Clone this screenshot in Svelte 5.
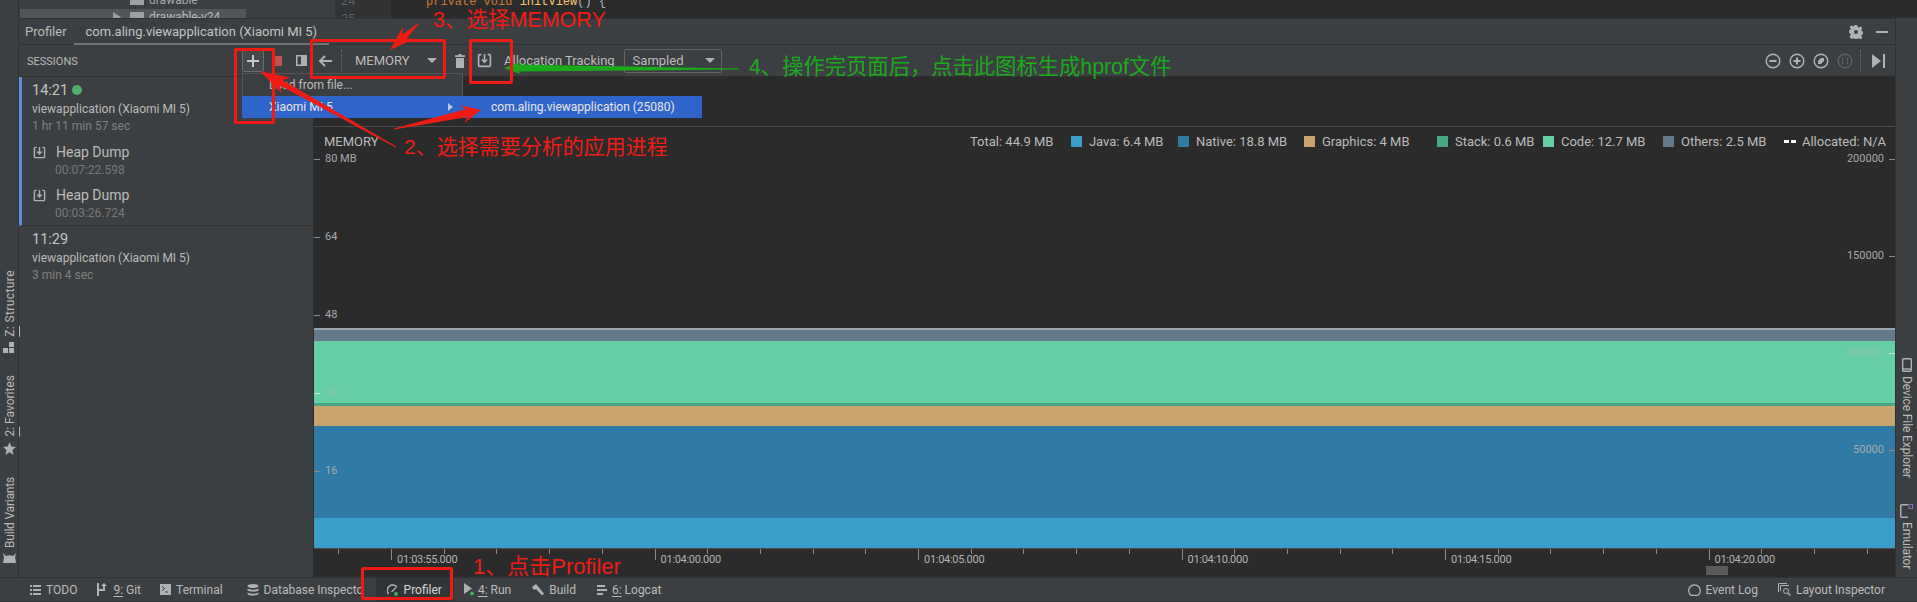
<script lang="ts">
  const majorTimes = ["01:03:55.000", "01:04:00.000", "01:04:05.000", "01:04:10.000", "01:04:15.000", "01:04:20.000"];
  const majorStep = 263.5;
  const minorStep = majorStep / 5;
  const firstMajor = 391 - 314;

  // every second gets a tick, counted back from the first labelled one
  const ticks = Array.from({ length: 31 }, (_, i) => {
    const index = i - 1;
    return { left: firstMajor + index * minorStep, major: index % 5 === 0 };
  });

  const legend = [
    { label: "Java: 6.4 MB", color: "#3a9dca", width: 107 },
    { label: "Native: 18.8 MB", color: "#2f7ba6", width: 126 },
    { label: "Graphics: 4 MB", color: "#c9a56d", width: 133 },
    { label: "Stack: 0.6 MB", color: "#47a783", width: 106 },
    { label: "Code: 12.7 MB", color: "#67cfa5", width: 120 },
    { label: "Others: 2.5 MB", color: "#64798a", width: 121 },
  ];

  const leftAxis = [
    { label: "80 MB", y: 2 },
    { label: "64", y: 80 },
    { label: "48", y: 158 },
    { label: "32", y: 236, faint: true },
    { label: "16", y: 314 },
  ];
  const rightAxis = [
    { label: "200000", y: 2 },
    { label: "150000", y: 99 },
    { label: "100000", y: 196, faint: true },
    { label: "50000", y: 293 },
  ];

  type Pt = [number, number];

  function arrow(tail: Pt, tip: Pt, w0: number, w1: number, headW: number, headL: number): string {
    const dx = tip[0] - tail[0];
    const dy = tip[1] - tail[1];
    const len = Math.hypot(dx, dy);
    const ux = dx / len;
    const uy = dy / len;
    const nx = -uy;
    const ny = ux;
    const nb = [tip[0] - ux * headL, tip[1] - uy * headL];
    const bb = [tip[0] - ux * headL * 1.25, tip[1] - uy * headL * 1.25];
    const p = (x: number, y: number) => `${x.toFixed(1)},${y.toFixed(1)}`;
    return [
      p(tail[0] + (nx * w0) / 2, tail[1] + (ny * w0) / 2),
      p(nb[0] + (nx * w1) / 2, nb[1] + (ny * w1) / 2),
      p(bb[0] + (nx * headW) / 2, bb[1] + (ny * headW) / 2),
      p(tip[0], tip[1]),
      p(bb[0] - (nx * headW) / 2, bb[1] - (ny * headW) / 2),
      p(nb[0] - (nx * w1) / 2, nb[1] - (ny * w1) / 2),
      p(tail[0] - (nx * w0) / 2, tail[1] - (ny * w0) / 2),
    ].join(" ");
  }

  const redArrows = [
    arrow([418, 24], [390, 50], 1, 6, 16, 20),
    arrow([396, 147], [260, 71], 1, 6, 18, 24),
    arrow([394, 129], [481, 110], 1, 8, 18, 15),
  ];
  const greenArrow = arrow([739, 69], [504, 68], 1, 7, 13, 14);
</script>

{#snippet dumpIcon(size)}
  <svg class="dump" width={size} height={size} viewBox="0 0 14 14" fill="none" stroke="currentColor">
    <path d="M4 1.5H2.5a1 1 0 0 0-1 1v9a1 1 0 0 0 1 1h9a1 1 0 0 0 1-1v-9a1 1 0 0 0-1-1H10" stroke-width="1.5" />
    <path d="M7 1v7M4.6 6 7 8.6 9.4 6" stroke-width="1.5" />
  </svg>
{/snippet}

<div class="app">
  <div class="top">
    <div class="tree">
      <div class="tree-row first">
        <span class="folder"></span><span>drawable</span>
      </div>
      <div class="tree-row selected">
        <span class="tri"></span><span class="folder"></span><span>drawable-v24</span>
      </div>
    </div>
    <div class="gutter">
      <div>24</div>
      <div>25</div>
    </div>
    <div class="editor">
      <div><span class="kw">private void</span> <span class="fn">initView</span>() {"{"}</div>
      <div class="second">Log.d(TAG, "initView");</div>
    </div>
  </div>

  <div class="middle">
    <aside class="strip-left">
      <div class="vert-item">
        <span class="vert-text wide"><u>Z:</u> Structure</span>
        <svg width="12" height="12" viewBox="0 0 12 12" fill="#afb1b3"><path d="M0 7h5v5H0zM6 7h5v5H6zM6 1h5v5H6z" /></svg>
      </div>
      <div class="vert-item">
        <span class="vert-text"><u>2:</u> Favorites</span>
        <svg width="13" height="13" viewBox="0 0 13 13" fill="#afb1b3"><path d="M6.5 0 8.3 4.5 13 5 9.4 8 10.5 13 6.5 10.3 2.5 13 3.6 8 0 5 4.7 4.5z" /></svg>
      </div>
      <div class="vert-item">
        <span class="vert-text tight">Build Variants</span>
        <svg width="13" height="10" viewBox="0 0 13 10" fill="#afb1b3"><path d="M0 0 3 3C5 2 8 2 10 3L13 0 12 4 13 10H0L1 4z" /></svg>
      </div>
    </aside>

    <div class="center">
      <div class="tabs">
        <span class="tab-name">Profiler</span>
        <span class="tab-active">com.aling.viewapplication (Xiaomi MI 5)</span>
        <span class="spacer"></span>
        <svg class="gear" width="14" height="14" viewBox="0 0 14 14">
          <path fill="#afb1b3" fill-rule="evenodd" d="M5.8 0h2.4l.4 2 1.4.6 1.700-1.100 1.700 1.700-1.100 1.700.6 1.400 2 .4v2.400l-2 .4-.6 1.400 1.100 1.700-1.700 1.700-1.700-1.100-1.400.6-.4 2H5.800l-.4-2-1.400-.6-1.700 1.100L.6 11.400l1.100-1.700-.6-1.400-2-.4V5.500l2-.4.6-1.400L.6 2 2.300.3 4 1.400l1.400-.6zM7 5a2 2 0 1 0 0 4 2 2 0 0 0 0-4z" />
        </svg>
        <span class="minimize"></span>
      </div>

      <div class="toolbar">
        <div class="tool-sessions">
          <span class="sessions-title">SESSIONS</span>
          <button class="plus" type="button" aria-label="New session">
            <svg width="12" height="12" viewBox="0 0 12 12" fill="#c8cacc"><path d="M5 0h2v5h5v2H7v5H5V7H0V5h5z" /></svg>
          </button>
          <span class="stop"></span>
          <svg class="panel-ico" width="11" height="11" viewBox="0 0 11 11">
            <path fill="#afb1b3" d="M0 0h11v11H0zM1.500 1.500v8H5v-8z" fill-rule="evenodd" />
          </svg>
        </div>
        <div class="tool-main">
          <svg width="14" height="12" viewBox="0 0 14 12" fill="none" stroke="#afb1b3" stroke-width="2"><path d="M14 6H2M7 1 2 6l5 5" /></svg>
          <span class="dots"></span>
          <span class="stage">MEMORY</span>
          <span class="caret"></span>
          <svg class="trash" width="10" height="14" viewBox="0 0 10 14" fill="#afb1b3"><path d="M3.500 0h3v1.300H10V3H0V1.300h3.500zM1 4h8v10H1z" /></svg>
          <span class="save">{@render dumpIcon(15)}</span>
          <span class="tracking">Allocation Tracking</span>
          <span class="combo">Sampled<span class="caret"></span></span>
          <span class="spacer"></span>
          <svg class="zoom-ico" width="16" height="16" viewBox="0 0 16 16" fill="none" stroke="#afb1b3" stroke-width="1.400"><circle cx="8" cy="8" r="6.800" /><path d="M4.500 8h7" stroke-width="2" /></svg>
          <svg class="zoom-ico" width="16" height="16" viewBox="0 0 16 16" fill="none" stroke="#afb1b3" stroke-width="1.400"><circle cx="8" cy="8" r="6.800" /><path d="M4.500 8h7M8 4.500v7" stroke-width="2" /></svg>
          <svg class="zoom-ico" width="16" height="16" viewBox="0 0 16 16" fill="none" stroke="#afb1b3" stroke-width="1.400"><circle cx="8" cy="8" r="6.800" /><path d="M5 8 8 5h3v3l-3 3H5z" fill="#afb1b3" stroke="none" /></svg>
          <svg class="zoom-ico" width="16" height="16" viewBox="0 0 16 16" fill="none" stroke="#5c5f61" stroke-width="1.400"><circle cx="8" cy="8" r="6.800" /><path d="M6.500 5h-1v6h1M9.500 5h1v6h-1" stroke-width="1" /></svg>
          <span class="dots end"></span>
          <svg class="step" width="13" height="14" viewBox="0 0 13 14" fill="#afb1b3"><path d="M0 0 9 7 0 14zM11 0h2v14h-2z" /></svg>
        </div>
      </div>

      <div class="body">
        <section class="sessions">
          <div class="session current">
            <div class="session-time">14:21<span class="live"></span></div>
            <div class="session-app">viewapplication (Xiaomi MI 5)</div>
            <div class="session-len">1 hr 11 min 57 sec</div>
            <div class="artifact">
              {@render dumpIcon(13)}
              <span class="artifact-name">Heap Dump</span>
            </div>
            <div class="artifact-time">00:07:22.598</div>
            <div class="artifact second-dump">
              {@render dumpIcon(13)}
              <span class="artifact-name">Heap Dump</span>
            </div>
            <div class="artifact-time">00:03:26.724</div>
          </div>
          <div class="session">
            <div class="session-time">11:29</div>
            <div class="session-app">viewapplication (Xiaomi MI 5)</div>
            <div class="session-len">3 min 4 sec</div>
          </div>
        </section>

        <section class="chart">
          <div class="chart-top"></div>
          <div class="chart-head">
            <span class="chart-title">MEMORY</span>
            <span class="spacer"></span>
            <span class="total">Total: 44.9 MB</span>
            {#each legend as item}
              <span class="legend-item" style="width: {item.width}px">
                <span class="swatch" style="background: {item.color}"></span>{item.label}
              </span>
            {/each}
            <span class="legend-alloc"><span class="dash"><i></i><i></i></span>Allocated: N/A</span>
          </div>

          <div class="plot">
            <div class="bands">
              <div class="band total-line"></div>
              <div class="band others"></div>
              <div class="band code"></div>
              <div class="band stack"></div>
              <div class="band graphics"></div>
              <div class="band native"></div>
              <div class="band java"></div>
            </div>
            {#each leftAxis as a}
              <span class="axis-left" class:faint={a.faint} style="top: {a.y}px"><i></i>{a.label}</span>
            {/each}
            {#each rightAxis as a}
              <span class="axis-right" class:faint={a.faint} style="top: {a.y}px">{a.label}<i></i></span>
            {/each}
          </div>

          <div class="timeline">
            {#each ticks as t}
              <span class="tick" class:major={t.major} style="left: {t.left}px"></span>
            {/each}
            {#each majorTimes as label, i}
              <span class="time-label" style="left: {firstMajor + i * majorStep + 6}px">{label}</span>
            {/each}
            <span class="thumb"></span>
          </div>
        </section>
      </div>
    </div>

    <aside class="strip-right">
      <svg width="10" height="14" viewBox="0 0 10 14" fill="none" stroke="#afb1b3" stroke-width="1.400"><rect x="0.700" y="0.700" width="8.600" height="12.600" rx="1" /><path d="M1 11h8" /></svg>
      <span class="vert-right">Device File Explorer</span>
      <svg class="emu" width="13" height="14" viewBox="0 0 13 14" fill="none" stroke="#afb1b3" stroke-width="1.400"><path d="M8 13.300H1.700a1 1 0 0 1-1-1V1.700a1 1 0 0 1 1-1H8" /><rect x="9" y="0.500" width="3.500" height="4" stroke="#8a6fb8" stroke-width="1" /></svg>
      <span class="vert-right">Emulator</span>
    </aside>
  </div>

  <footer class="status">
    <span class="st todo">
      <svg width="11" height="10" viewBox="0 0 11 10" fill="#afb1b3"><path d="M0 0h2v2H0zM3 0h8v2H3zM0 4h2v2H0zM3 4h8v2H3zM0 8h2v2H0zM3 8h8v2H3z" /></svg>TODO
    </span>
    <span class="st git">
      <svg width="11" height="13" viewBox="0 0 11 13" fill="#afb1b3"><path d="M0 0h2v13H0zM2 6h4V3H4l3-3 3 3H8v5H2z" /></svg><span><u>9:</u> Git</span>
    </span>
    <span class="st terminal">
      <svg width="11" height="11" viewBox="0 0 11 11"><path fill="#afb1b3" d="M0 0h11v11H0z" /><path fill="none" stroke="#3c3f41" d="m2 2.500 2.500 2L2 6.500M5 8h3" /></svg>Terminal
    </span>
    <span class="st database">
      <svg width="12" height="12" viewBox="0 0 12 12" fill="#afb1b3"><ellipse cx="6" cy="2" rx="5.500" ry="2" /><path d="M.5 4.500C2 6 10 6 11.500 4.500V6.500C10 8 2 8 .5 6.500zM.5 8.500C2 10 10 10 11.500 8.500V10C10 12 2 12 .5 10z" /></svg>Database Inspector
    </span>
    <span class="st profiler">
      <svg width="12" height="12" viewBox="0 0 12 12" fill="none"><path d="M1.500 10A5 5 0 0 1 10 3" stroke="#afb1b3" stroke-width="1.600" /><path d="M4.500 8 9 3.500" stroke="#afb1b3" stroke-width="1.200" /><circle cx="9" cy="10" r="2" fill="#35b34a" /></svg>Profiler
    </span>
    <span class="st run">
      <svg width="11" height="13" viewBox="0 0 11 13"><path d="M0 0 8 5.500 0 11z" fill="#afb1b3" /><circle cx="8" cy="10.500" r="2" fill="#35b34a" /></svg><span><u>4:</u> Run</span>
    </span>
    <span class="st build">
      <svg width="12" height="12" viewBox="0 0 12 12" fill="#afb1b3"><path d="M0 3 4 0l8 9.500-2 2L4 5 2 6z" /></svg>Build
    </span>
    <span class="st logcat">
      <svg width="10" height="10" viewBox="0 0 10 10" fill="#afb1b3"><path d="M0 0h8v2H0zM0 4h10v2H0zM0 8h6v2H0z" /></svg><span><u>6:</u> Logcat</span>
    </span>
    <span class="spacer"></span>
    <span class="st event">
      <svg width="13" height="13" viewBox="0 0 13 13" fill="none" stroke="#afb1b3" stroke-width="1.300"><path d="M3 12.300a5.800 5.800 0 1 1 7 0z" /></svg>Event Log
    </span>
    <span class="st layout">
      <svg width="13" height="13" viewBox="0 0 13 13" fill="none" stroke="#afb1b3"><path d="M9 .5H.5V9M11 2.500H2.500V8" /><circle cx="8" cy="8" r="2.500" /><path d="m10 10 2.500 2.500" stroke-width="1.500" /></svg>Layout Inspector
    </span>
  </footer>

  <!-- popup menu, then the screenshot's hand-drawn annotations on top of it -->
  <div class="menu">
    <div class="menu-row">Load from file...</div>
    <div class="menu-row active">Xiaomi MI 5<span class="submenu-caret"></span></div>
  </div>
  <div class="submenu">com.aling.viewapplication (25080)</div>

  <svg class="arrows" width="1917" height="602" aria-hidden="true">
    {#each redArrows as points}
      <polygon {points} fill="#f01c14" />
    {/each}
    <polygon points={greenArrow} fill="#1aab1a" />
  </svg>

  <span class="red-box box-plus"></span>
  <span class="red-box box-memory"></span>
  <span class="red-box box-save"></span>
  <span class="red-box box-profiler"></span>

  <span class="note n3">3、选择MEMORY</span>
  <span class="note n2">2、选择需要分析的应用进程</span>
  <span class="note n4">4、操作完页面后，点击此图标生成hprof文件</span>
  <span class="note n1">1、点击Profiler</span>
</div>

<style>
  :global(body) {
    margin: 0;
    background: #2b2b2b;
  }

  .app {
    position: relative;
    width: 1917px;
    height: 602px;
    overflow: hidden;
    display: flex;
    flex-direction: column;
    background: #3c3f41;
    color: #bbbbbb;
    font-family: Roboto, "Liberation Sans", sans-serif;
    font-size: 12px;
  }

  .spacer {
    flex: 1;
  }

  u {
    text-underline-offset: 2px;
  }

  svg {
    flex: none;
  }

  /* editor strip above the tool window */
  .top {
    height: 18px;
    flex: none;
    display: flex;
    overflow: hidden;
  }

  .tree {
    width: 317px;
    margin-left: 18px;
    border-left: 1px solid #323232;
    margin-top: -8px;
    box-sizing: border-box;
  }

  .tree-row {
    height: 16px;
    margin-bottom: 1px;
    margin-left: 1px;
    display: flex;
    align-items: center;
    gap: 5px;
    padding-left: 110px;
    width: 226px;
    box-sizing: border-box;
    color: #a8a8a8;
  }

  .tree-row.selected {
    background: #525658;
    padding-left: 93px;
    color: #bbbbbb;
  }

  .tri {
    width: 0;
    height: 0;
    border-left: 8px solid #9a9c9e;
    border-top: 5px solid transparent;
    border-bottom: 5px solid transparent;
    margin-right: 4px;
  }

  .folder {
    width: 14px;
    height: 10px;
    background: #9aa2a8;
  }

  .gutter {
    width: 56px;
    flex: none;
    background: #313335;
    color: #606366;
    font-family: "Liberation Mono", monospace;
    font-size: 12px;
    line-height: 18px;
    padding-left: 6px;
    margin-top: -7px;
    box-sizing: border-box;
  }

  .editor {
    flex: 1;
    background: #2b2b2b;
    color: #a9b7c6;
    font-family: "Liberation Mono", monospace;
    font-size: 12px;
    line-height: 19px;
    padding-left: 35px;
    margin-top: -7px;
    white-space: pre;
  }

  .editor .kw {
    color: #cc7832;
  }

  .editor .fn {
    color: #ffc66d;
  }

  .editor .second {
    padding-left: 28px;
  }

  .middle {
    flex: 1;
    min-height: 0;
    display: flex;
    background: #3c3f41;
  }

  .strip-left {
    width: 19px;
    flex: none;
    box-sizing: border-box;
    border-right: 1px solid #323232;
    display: flex;
    flex-direction: column;
    justify-content: flex-end;
    align-items: center;
    gap: 22px;
    padding-bottom: 14px;
  }

  .vert-item {
    display: flex;
    flex-direction: column;
    align-items: center;
    gap: 5px;
  }

  .vert-text {
    writing-mode: vertical-rl;
    transform: rotate(180deg);
    line-height: 14px;
    white-space: nowrap;
    margin-left: 1px;
  }

  .vert-text.wide {
    letter-spacing: 0.4px;
  }

  .vert-text.tight {
    letter-spacing: -0.2px;
  }

  .center {
    flex: 1;
    min-width: 0;
    display: flex;
    flex-direction: column;
  }

  .tabs {
    height: 27px;
    flex: none;
    box-sizing: border-box;
    display: flex;
    align-items: center;
    padding-left: 6px;
    border-top: 1px solid #323232;
    border-bottom: 1px solid #323232;
    font-size: 13px;
  }

  .tab-name {
    margin-right: 19px;
  }

  .tab-active {
    height: 100%;
    display: flex;
    align-items: center;
    padding: 0 12px;
    margin-left: -12px;
    box-sizing: border-box;
    border-bottom: 2px solid #6e7274;
    margin-bottom: -1px;
    color: #c4c4c4;
  }

  .gear {
    margin-right: 13px;
  }

  .minimize {
    width: 12px;
    height: 2px;
    background: #afb1b3;
    margin-right: 7px;
  }

  .toolbar {
    height: 32px;
    flex: none;
    box-sizing: border-box;
    display: flex;
    border-bottom: 1px solid #2f2f2f;
  }

  .tool-sessions {
    width: 295px;
    flex: none;
    display: flex;
    align-items: center;
    padding-left: 8px;
    box-sizing: border-box;
  }

  .sessions-title {
    font-size: 11px;
    width: 215px;
    margin-top: 1px;
  }

  .plus {
    width: 22px;
    height: 22px;
    padding: 0;
    background: #45494a;
    border: 1px solid #6b6e70;
    border-radius: 2px;
    display: flex;
    align-items: center;
    justify-content: center;
  }

  .stop {
    width: 10px;
    height: 10px;
    background: #bd5553;
    margin-left: 8px;
  }

  .panel-ico {
    margin-left: 14px;
  }

  .tool-main {
    flex: 1;
    display: flex;
    align-items: center;
    padding-left: 4px;
    min-width: 0;
  }

  .dots {
    width: 0;
    height: 22px;
    border-left: 1px dotted #6a6d6f;
    margin-left: 9px;
  }

  .dots.end {
    margin-left: 7px;
    margin-right: 11px;
  }

  .stage {
    margin-left: 13px;
    font-size: 13px;
    width: 72px;
  }

  .caret {
    width: 0;
    height: 0;
    border-top: 5px solid #afb1b3;
    border-left: 5px solid transparent;
    border-right: 5px solid transparent;
  }

  .trash {
    margin-left: 18px;
  }

  .save {
    margin-left: 12px;
    display: flex;
    color: #afb1b3;
  }

  .tracking {
    margin-left: 12px;
    font-size: 13px;
  }

  .combo {
    margin-left: 9px;
    width: 98px;
    height: 24px;
    box-sizing: border-box;
    border: 1px solid #646464;
    border-radius: 2px;
    display: flex;
    align-items: center;
    justify-content: space-between;
    padding: 0 6px 0 8px;
    font-size: 13px;
  }

  .zoom-ico {
    margin-left: 8px;
  }

  .step {
    margin-right: 10px;
  }

  .body {
    flex: 1;
    min-height: 0;
    display: flex;
  }

  .sessions {
    width: 295px;
    flex: none;
    border-right: 1px solid #2f2f2f;
    box-sizing: border-box;
  }

  .session {
    padding: 4px 0 0 13px;
  }

  .session.current {
    height: 149px;
    box-sizing: border-box;
    border-bottom: 1px solid #323232;
    border-left: 3px solid #5b8fd9;
    padding: 4px 0 0 10px;
  }

  .session-time {
    font-size: 14.5px;
    line-height: 20px;
    color: #c4c4c4;
    display: flex;
    align-items: center;
    gap: 4px;
  }

  .live {
    width: 10px;
    height: 10px;
    border-radius: 50%;
    background: #4caf6a;
    margin-top: -2px;
  }

  .session-app {
    line-height: 16px;
  }

  .session-len {
    margin-top: 1px;
    line-height: 16px;
    color: #808080;
  }

  .artifact {
    margin-top: 9px;
    margin-left: 1px;
    display: flex;
    align-items: center;
    gap: 10px;
    color: #afb1b3;
    height: 18px;
  }

  .artifact.second-dump {
    margin-top: 8px;
  }

  .artifact-name {
    font-size: 14px;
    color: #bbbbbb;
  }

  .artifact-time {
    margin: 1px 0 0 23px;
    line-height: 16px;
    color: #787878;
  }

  .chart {
    flex: 1;
    min-width: 0;
    display: flex;
    flex-direction: column;
    background: #2b2b2b;
  }

  .chart-top {
    height: 49px;
    flex: none;
    border-bottom: 1px solid #4b4b4b;
  }

  .chart-head {
    height: 30px;
    flex: none;
    box-sizing: border-box;
    display: flex;
    align-items: center;
    padding: 0 9px 2px 10px;
    font-size: 13px;
    white-space: nowrap;
  }

  .total {
    width: 101px;
  }

  .legend-item {
    display: flex;
    align-items: center;
    gap: 7px;
    flex: none;
    white-space: nowrap;
  }

  .swatch {
    width: 11px;
    height: 11px;
    flex: none;
  }

  .legend-alloc {
    display: flex;
    align-items: center;
    gap: 6px;
  }

  .dash {
    display: flex;
    gap: 2px;
  }

  .dash i {
    width: 5px;
    height: 3px;
    background: #fff;
  }

  .plot {
    flex: 1;
    min-height: 0;
    position: relative;
    display: flex;
    flex-direction: column;
    justify-content: flex-end;
    font-size: 11px;
  }

  .band {
    flex: none;
  }

  .total-line {
    height: 2px;
    background: #9aa4aa;
  }

  .others {
    height: 11px;
    background: #64798a;
  }

  .code {
    height: 62px;
    background: #67cfa5;
  }

  .stack {
    height: 3px;
    background: #47a783;
  }

  .graphics {
    height: 20px;
    background: #c9a56d;
  }

  .native {
    height: 92px;
    background: #2f7ba6;
  }

  .java {
    height: 30px;
    background: #3a9dca;
  }

  .axis-left,
  .axis-right {
    position: absolute;
    line-height: 14px;
    margin-top: -7px;
    display: flex;
    align-items: center;
    color: #a9a9a9;
  }

  .axis-left {
    left: 0;
    gap: 5px;
  }

  .axis-right {
    right: 0;
    gap: 5px;
  }

  .axis-left i,
  .axis-right i {
    width: 6px;
    height: 1px;
    background: #8a8a8a;
  }

  .faint {
    color: rgba(190, 190, 190, 0.45);
  }

  .faint i {
    background: rgba(255, 255, 255, 0.6);
  }

  .timeline {
    height: 29px;
    flex: none;
    position: relative;
    overflow: hidden;
    border-top: 1px solid #4b4b4b;
    box-sizing: border-box;
  }

  .tick {
    position: absolute;
    top: 0;
    width: 1px;
    height: 5px;
    background: #8a8a8a;
  }

  .tick.major {
    height: 11px;
  }

  .time-label {
    position: absolute;
    top: 4px;
    line-height: 14px;
    font-size: 11px;
    letter-spacing: -0.3px;
    color: #b4b4b4;
  }

  .thumb {
    position: absolute;
    left: 1392px;
    top: 17px;
    width: 22px;
    height: 9px;
    background: #5a5a5a;
  }

  .strip-right {
    width: 22px;
    flex: none;
    box-sizing: border-box;
    border-left: 1px solid #323232;
    display: flex;
    flex-direction: column;
    align-items: center;
    padding-top: 340px;
  }

  .vert-right {
    writing-mode: vertical-rl;
    line-height: 14px;
    margin-top: 4px;
    letter-spacing: -0.1px;
    white-space: nowrap;
  }

  .emu {
    margin-top: 26px;
  }

  .status {
    height: 25px;
    flex: none;
    box-sizing: border-box;
    display: flex;
    align-items: center;
    border-top: 1px solid #323232;
    border-bottom: 1px solid #333536;
    padding: 0 32px 0 30px;
    white-space: nowrap;
  }

  .st {
    display: flex;
    align-items: center;
    gap: 5px;
    flex: none;
  }

  .git {
    margin-left: 20px;
  }

  .terminal {
    margin-left: 19px;
  }

  .database {
    margin-left: 24px;
    width: 115px;
    overflow: hidden;
  }

  .profiler {
    height: 100%;
    margin-left: 14px;
    padding: 0 12px 0 11px;
    background: #323537;
    color: #d4d4d4;
  }

  .run {
    margin-left: 10px;
    gap: 3px;
  }

  .build {
    margin-left: 21px;
  }

  .logcat {
    margin-left: 21px;
  }

  .layout {
    margin-left: 20px;
  }

  /* popups and annotations */
  .arrows {
    position: absolute;
    left: 0;
    top: 0;
    pointer-events: none;
  }

  .menu {
    position: absolute;
    left: 242px;
    top: 73px;
    width: 221px;
    height: 44px;
    background: #3c3f41;
    box-sizing: border-box;
    border: 1px solid #555;
    border-bottom: 0;
  }

  .menu-row {
    height: 22px;
    display: flex;
    align-items: center;
    padding-left: 26px;
    position: relative;
  }

  .menu-row.active {
    background: #2f65ca;
    color: #e8e8e8;
    margin: 0 -1px;
    padding-left: 27px;
  }

  .submenu-caret {
    position: absolute;
    right: 10px;
    top: 7px;
    border-left: 5px solid #b9c7e6;
    border-top: 4px solid transparent;
    border-bottom: 4px solid transparent;
  }

  .submenu {
    position: absolute;
    left: 463px;
    top: 96px;
    width: 239px;
    height: 22px;
    box-sizing: border-box;
    padding-left: 28px;
    background: #2f65ca;
    color: #e8e8e8;
    line-height: 22px;
  }

  .red-box {
    position: absolute;
    box-sizing: border-box;
    border: 3px solid #f01c14;
    border-radius: 2px;
  }

  .box-plus {
    left: 234px;
    top: 48px;
    width: 41px;
    height: 76px;
  }

  .box-memory {
    left: 310px;
    top: 39px;
    width: 136px;
    height: 40px;
  }

  .box-save {
    left: 469px;
    top: 39px;
    width: 44px;
    height: 45px;
  }

  .box-profiler {
    left: 361px;
    top: 567px;
    width: 92px;
    height: 33px;
  }

  .note {
    position: absolute;
    font-family: "Liberation Sans", "Noto Sans CJK SC", sans-serif;
    font-size: 21px;
    line-height: 26px;
    color: #f01c14;
    white-space: nowrap;
  }

  .n3 {
    left: 433px;
    top: 7px;
    font-size: 21.5px;
  }

  .n2 {
    left: 404px;
    top: 134px;
  }

  .n4 {
    left: 749px;
    top: 54px;
    font-size: 21.3px;
    color: #1aab1a;
  }

  .n1 {
    left: 473px;
    top: 554px;
    font-size: 22px;
  }
</style>
